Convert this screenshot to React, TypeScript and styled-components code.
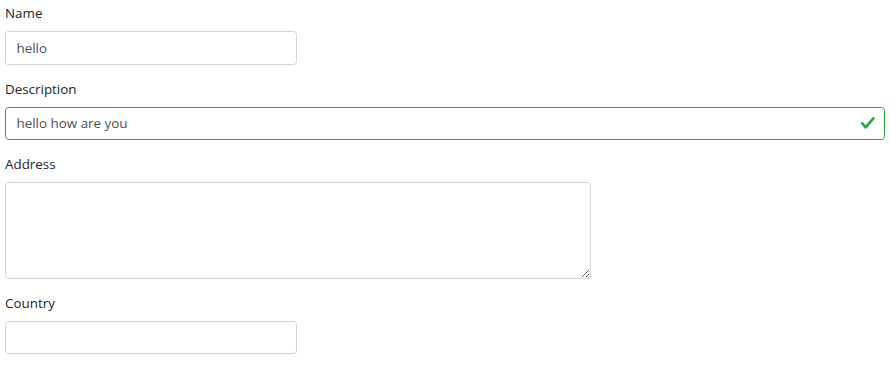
import React from "react";
import styled, { createGlobalStyle } from "styled-components";

const GlobalStyle = createGlobalStyle`
  html { font-size: 14px; }
  body {
    margin: 0;
    background: #fff;
    font-family: "Segoe UI", "Open Sans", "Noto Sans", sans-serif;
    font-size: 13.4px;
    line-height: 1.5;
    color: #212529;
  }
  * { box-sizing: border-box; }
`;

const Form = styled.form`
  padding: 3px 5px;
  display: flex;
  flex-direction: column;
`;

const Group = styled.div<{ $width: string }>`
  width: ${(p) => p.$width};
  margin-bottom: 14px;
  display: flex;
  flex-direction: column;
`;

const Label = styled.label`
  display: block;
  margin-bottom: 7px;
  height: 21px;
  line-height: 21px;
  color: #212529;
`;

const Input = styled.input<{ $valid?: boolean }>`
  display: block;
  width: 100%;
  height: 33.5px;
  padding: 0 10.5px;
  font-family: inherit;
  font-size: 13.4px;
  line-height: 1.5;
  color: #495057;
  background-color: #fff;
  border: 1px solid ${(p) => (p.$valid ? "#28a745" : "#ced4da")};
  border-radius: 3.5px;
  outline: none;
  padding-right: ${(p) => (p.$valid ? "32px" : "10.5px")};
`;

const TextArea = styled.textarea`
  display: block;
  width: 100%;
  height: 96.5px;
  padding: 5.25px 10.5px;
  font-family: inherit;
  font-size: 13.4px;
  line-height: 1.5;
  color: #495057;
  background-color: #fff;
  border: 1px solid #ced4da;
  border-radius: 3.5px;
  outline: none;
`;

const InputWrap = styled.div`
  position: relative;
`;

const ValidIcon = styled.svg`
  position: absolute;
  right: 9px;
  top: 50%;
  transform: translateY(-50%);
  width: 15.75px;
  height: 15.75px;
`;

export default function App() {
  return (
    <>
      <GlobalStyle />
      <Form onSubmit={(e) => e.preventDefault()}>
        <Group $width="292px">
          <Label htmlFor="name">Name</Label>
          <Input id="name" defaultValue="hello" />
        </Group>
        <Group $width="100%">
          <Label htmlFor="desc">Description</Label>
          <InputWrap>
            <Input id="desc" $valid defaultValue="hello how are you" />
            <ValidIcon viewBox="0 0 8 8" aria-hidden>
              <path
                fill="#28a745"
                d="M2.3 6.73L.6 4.53c-.4-1.04.46-1.4 1.1-.8l1.1 1.4 3.4-3.8c.6-.63 1.6-.27 1.2.7l-4 4.6c-.43.5-.8.4-1.1.1z"
              />
            </ValidIcon>
          </InputWrap>
        </Group>
        <Group $width="586px">
          <Label htmlFor="addr">Address</Label>
          <TextArea id="addr" rows={4} />
        </Group>
        <Group $width="292px">
          <Label htmlFor="country">Country</Label>
          <Input id="country" />
        </Group>
      </Form>
    </>
  );
}
